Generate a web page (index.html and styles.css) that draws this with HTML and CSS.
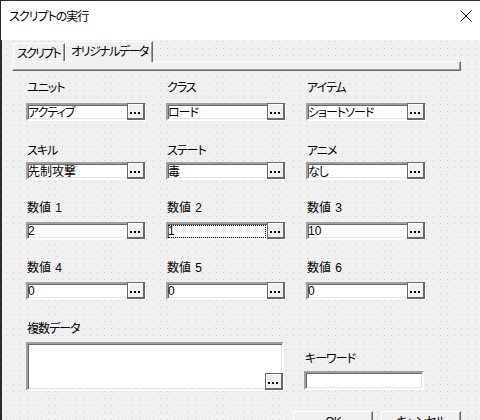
FILE: index.html
```html
<!DOCTYPE html>
<html lang="ja">
<head>
<meta charset="utf-8">
<title>スクリプトの実行</title>
<link rel="stylesheet" href="styles.css">
</head>
<body>
<div class="window">
  <div class="titlebar">
    <span class="title">スクリプトの実行</span>
    <svg class="close" viewBox="0 0 12 12" width="12" height="12"><path d="M0.5 0.5 L11.5 11.5 M11.5 0.5 L0.5 11.5" stroke="#000" stroke-width="1" fill="none"/></svg>
  </div>
  <div class="client">
    <div class="tabctl">
      <div class="tabstrip">
        <div class="tab">スクリプト</div>
        <div class="tab tab-active">オリジナルデータ</div>
      </div>
      <div class="tabpanel"></div>
    </div>

    <div class="row row1">
      <div class="field"><div class="label">ユニット</div><div class="box"><span class="value">アクティブ</span><span class="ell"></span></div></div>
      <div class="field"><div class="label">クラス</div><div class="box"><span class="value">ロード</span><span class="ell"></span></div></div>
      <div class="field"><div class="label">アイテム</div><div class="box"><span class="value">ショートソード</span><span class="ell"></span></div></div>
    </div>

    <div class="row row2">
      <div class="field"><div class="label">スキル</div><div class="box"><span class="value kanji">先制攻撃</span><span class="ell"></span></div></div>
      <div class="field"><div class="label">ステート</div><div class="box"><span class="value">毒</span><span class="ell"></span></div></div>
      <div class="field"><div class="label">アニメ</div><div class="box"><span class="value">なし</span><span class="ell"></span></div></div>
    </div>

    <div class="row row3">
      <div class="field"><div class="label numlabel">数値 1</div><div class="box"><span class="value num">2</span><span class="ell"></span></div></div>
      <div class="field"><div class="label numlabel">数値 2</div><div class="box"><span class="value num focus">1</span><span class="ell"></span></div></div>
      <div class="field"><div class="label numlabel">数値 3</div><div class="box"><span class="value num">10</span><span class="ell"></span></div></div>
    </div>

    <div class="row row4">
      <div class="field"><div class="label numlabel">数値 4</div><div class="box"><span class="value num">0</span><span class="ell"></span></div></div>
      <div class="field"><div class="label numlabel">数値 5</div><div class="box"><span class="value num">0</span><span class="ell"></span></div></div>
      <div class="field"><div class="label numlabel">数値 6</div><div class="box"><span class="value num">0</span><span class="ell"></span></div></div>
    </div>

    <div class="row row5">
      <div class="field field-wide"><div class="label">複数データ</div><div class="box memo"><span class="ell ell-bottom"></span></div></div>
      <div class="field field-kw"><div class="label">キーワード</div><div class="box kw"></div></div>
    </div>

    <div class="btnrow">
      <div class="btn btn-default">OK</div>
      <div class="btn">キャンセル</div>
    </div>
  </div>
</div>
</body>
</html>
```
FILE: styles.css
```css
* { box-sizing: border-box; }

body {
  margin: 0;
  background: #f0f0f0;
  font-family: "Noto Sans CJK JP", sans-serif;
  font-size: 12px;
  color: #000;
  font-feature-settings: "palt";
}

.window {
  width: 480px;
  height: 420px;
  overflow: hidden;
  border-top: 1px solid #2b2b2b;
  border-left: 1px solid #2b2b2b;
  background: #fff;
}

.titlebar {
  height: 29px;
  display: flex;
  align-items: center;
  justify-content: space-between;
  padding: 0 8px 0 8px;
  background: #fff;
}

.title { font-size: 12px; line-height: 14px; letter-spacing: -1px; }

.close { width: 12px; height: 12px; display: block; }

.client {
  height: 390px;
  border-left: 1px solid #2b2b2b;
  background-color: #f0f0f0;
  background-image: conic-gradient(at 1px 1px, transparent 270deg, #cdcdcd 0);
  background-size: 7px 7px;
  background-position: 4px 1px;
}

/* Tab control */
.tabctl {
  margin: 10px 0 0 10px;
  width: 449px;
}

.tabstrip {
  display: flex;
  align-items: flex-end;
  height: 21px;
  padding-left: 1px;
}

.tab {
  width: 52px;
  height: 18px;
  padding: 2px 0 0 3px;
  line-height: 14px;
  letter-spacing: -1.7px;
  white-space: nowrap;
  overflow: hidden;
  border-style: solid;
  border-width: 1px 1px 0 1px;
  border-color: #fff #696969 transparent #fff;
  box-shadow: inset -1px 0 #a0a0a0;
  background: #f0f0f0;
}

.tab-active {
  width: 88px;
  height: 21px;
  margin-bottom: -1px;
  padding: 2px 0 0 5px;
  letter-spacing: -1.5px;
  position: relative;
  z-index: 1;
}

.tabpanel {
  height: 10px;
  border: 1px solid;
  border-color: #fff #696969 #696969 #fff;
  box-shadow: inset -1px -1px #a0a0a0;
  background: #f0f0f0;
}

/* Field rows */
.row {
  display: flex;
  align-items: flex-start;
  gap: 20px;
  padding-left: 24px;
}

.row1 { margin-top: 9px; }
.row2 { margin-top: 22px; }
.row3 { margin-top: 21px; }
.row4 { margin-top: 21px; }
.row5 { margin-top: 21px; }

.field { width: 120px; }

.label {
  height: 14px;
  line-height: 14px;
  padding-left: 1px;
  letter-spacing: -1px;
  white-space: nowrap;
}

.numlabel {
  font-family: "Liberation Sans", "Noto Sans CJK JP", sans-serif;
  letter-spacing: 0;
  word-spacing: 1px;
}

.box {
  position: relative;
  height: 18px;
  margin-top: 7px;
  background: #fff;
  border: 2px solid;
  border-color: #a0a0a0 #fff #fff #a0a0a0;
  box-shadow: inset 1px 1px #696969, inset -1px -1px #e3e3e3;
}

.row1 .box { margin-top: 9px; }
.row2 .box { margin-top: 5px; }

.value {
  display: block;
  line-height: 14px;
  letter-spacing: -1px;
  white-space: nowrap;
}

.kanji { letter-spacing: 0; }

.num {
  font-family: "Liberation Sans", "Noto Sans CJK JP", sans-serif;
  letter-spacing: 0;
}

.focus {
  width: 98px;
  height: 13px;
  margin-top: 1px;
  line-height: 11px;
  border: 1px dotted #000;
  border-left-width: 0;
}

/* "..." buttons overlaid on text boxes */
.ell {
  position: absolute;
  right: -1px;
  top: -2px;
  width: 18px;
  height: 17px;
  background: #f0f0f0;
  border: 1px solid #696969;
  border-right-width: 2px;
  border-bottom-width: 2px;
  box-shadow: inset 1px 1px #fff;
}

.ell::after {
  content: "";
  position: absolute;
  left: 2px;
  top: 8px;
  width: 2px;
  height: 2px;
  background: #000;
  box-shadow: 4px 0 #000, 8px 0 #000;
}

.ell-bottom {
  top: auto;
  bottom: -1px;
}

.field-wide { width: 258px; }
.memo { height: 49px; }

.field-kw { margin-top: 30px; }
.kw { height: 19px; margin-top: 6px; }

/* Bottom buttons */
.btnrow {
  display: flex;
  gap: 8px;
  padding-left: 291px;
  margin-top: 20px;
}

.btn {
  width: 80px;
  height: 23px;
  line-height: 21px;
  text-align: center;
  letter-spacing: -1px;
  background: #f0f0f0;
  border: 1px solid;
  border-color: #fff #696969 #696969 #fff;
  box-shadow: inset -1px -1px #a0a0a0;
  font-family: "Liberation Sans", "Noto Sans CJK JP", sans-serif;
}
```
